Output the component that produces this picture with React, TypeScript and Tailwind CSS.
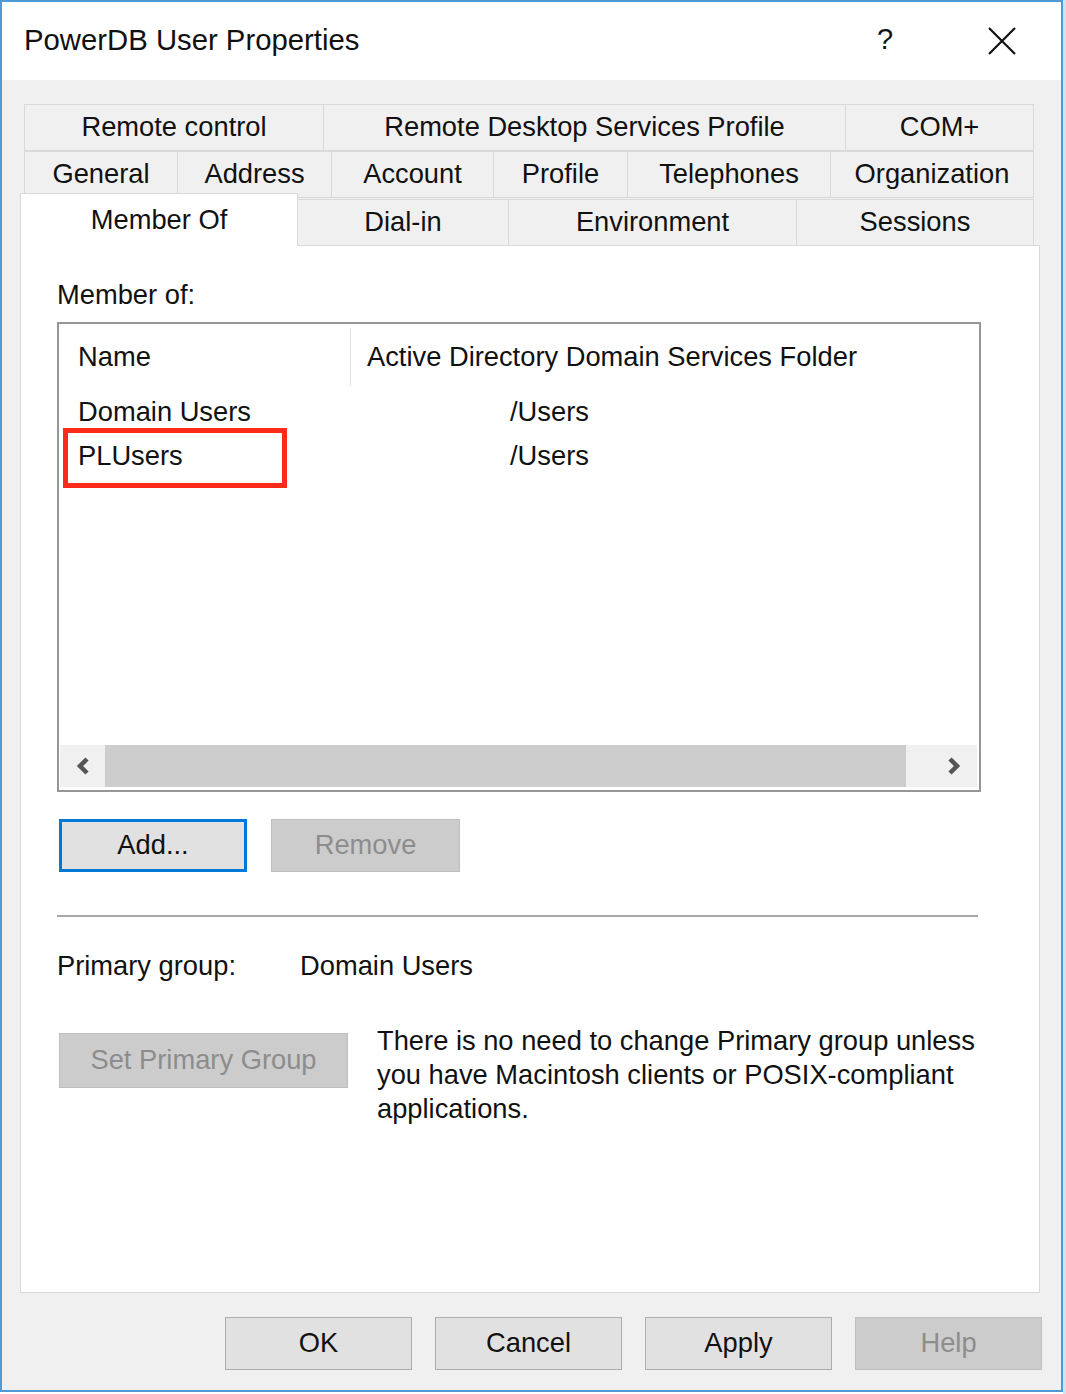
import React from "react";

const font = { fontFamily: '"Liberation Sans", Arial, sans-serif' };

function Tab({ w, label, h = 47 }: { w: number; label: string; h?: number }) {
  return (
    <div
      className="flex items-center justify-center border border-[#d9d9d9] bg-[#f0f0f0] text-[27.3px] text-[#111] -mr-px -mb-px"
      style={{ width: w, height: h }}
    >
      {label}
    </div>
  );
}

function Btn({ w, h, label, disabled, focus }: { w: number; h: number; label: string; disabled?: boolean; focus?: boolean }) {
  const cls = disabled
    ? "bg-[#cccccc] border border-[#bfbfbf] text-[#8d8d8d]"
    : focus
    ? "bg-[#e1e1e1] border-[3px] border-[#0078d7] text-[#111]"
    : "bg-[#e1e1e1] border border-[#adadad] text-[#111]";
  return (
    <div className={`flex items-center justify-center text-[27.3px] shrink-0 ${cls}`} style={{ width: w, height: h }}>
      {label}
    </div>
  );
}

function Chevron({ dir }: { dir: "l" | "r" }) {
  return (
    <svg width="16" height="22" viewBox="0 0 16 22">
      <path
        d={dir === "l" ? "M12 4 L5 11 L12 18" : "M4 4 L11 11 L4 18"}
        fill="none"
        stroke="#555"
        strokeWidth="4.5"
      />
    </svg>
  );
}

export default function App() {
  return (
    <div className="w-[1066px] h-[1394px] bg-white flex" style={font}>
      <div className="w-[1063px] h-[1392px] border-2 border-[#4f9ad4] flex flex-col bg-[#f0f0f0]">
        {/* Title bar */}
        <div className="h-[78px] bg-white flex items-center pl-[22px] shrink-0">
          <div className="text-[29.3px] text-[#111] -mt-[2px]">PowerDB User Properties</div>
          <div className="flex-1" />
          <div className="text-[29px] text-[#111] w-[30px] text-center -mt-[2px]">?</div>
          <div className="ml-[88px] mr-[45px] flex">
            <svg width="28" height="28" viewBox="0 0 28 28">
              <path d="M1 1 L27 27 M27 1 L1 27" stroke="#111" strokeWidth="2.2" fill="none" />
            </svg>
          </div>
        </div>

        {/* Body */}
        <div className="flex-1 flex flex-col px-[18px] pt-[24px]">
          <div className="ml-[4px] w-[1009px] flex flex-col">
            <div className="flex h-[47px]">
              <Tab w={300} label="Remote control" />
              <Tab w={523} label="Remote Desktop Services Profile" />
              <Tab w={189} label="COM+" />
            </div>
            <div className="flex h-[47px]">
              <Tab w={154} label="General" />
              <Tab w={155} label="Address" />
              <Tab w={163} label="Account" />
              <Tab w={135} label="Profile" />
              <Tab w={204} label="Telephones" />
              <Tab w={204} label="Organization" />
            </div>
            <div className="flex h-[47px] items-end">
              <div className="relative z-10 -ml-[4px] h-[53px] w-[278px] -mb-px bg-white border border-[#d9d9d9] border-b-0 flex justify-center pt-[6px] text-[27.3px] text-[#111] -mr-px">
                Member Of
              </div>
              <Tab w={212} label="Dial-in" />
              <Tab w={289} label="Environment" />
              <Tab w={238} label="Sessions" />
            </div>
          </div>

          {/* Panel */}
          <div className="w-[1020px] h-[1048px] bg-white border border-[#d9d9d9] pl-[36px] pt-[33px] flex flex-col">
            <div className="h-[32px] flex items-center text-[27.3px] text-[#111]">Member of:</div>

            <div className="relative mt-[11px] w-[924px] h-[470px] border-2 border-[#969696] flex flex-col">
              <div className="h-[66px] flex items-start text-[27.3px] text-[#111]">
                <div className="w-[291px] h-full flex items-center pl-[19px]">Name</div>
                <div className="w-px h-[58px] mt-[4px] bg-[#e3e3e3]" />
                <div className="h-full flex items-center pl-[16px]">Active Directory Domain Services Folder</div>
              </div>
              {[
                ["Domain Users", "/Users"],
                ["PLUsers", "/Users"],
              ].map(([n, f]) => (
                <div key={n} className="h-[44px] flex items-center text-[27.3px] text-[#111]">
                  <div className="w-[292px] pl-[19px]">{n}</div>
                  <div className="pl-[159px]">{f}</div>
                </div>
              ))}
              <div className="flex-1" />
              <div className="h-[42px] mb-[3px] ml-[1px] mr-[2px] flex">
                <div className="w-[45px] bg-[#f0f0f0] flex items-center justify-center">
                  <Chevron dir="l" />
                </div>
                <div className="flex-1 bg-[#cdcdcd]" />
                <div className="w-[71px] bg-[#f0f0f0] flex items-center justify-center pl-[25px]">
                  <Chevron dir="r" />
                </div>
              </div>
              <div className="absolute left-[4px] top-[104px] w-[224px] h-[60px] border-[5px] border-[#ff2a1a]" />
            </div>

            <div className="mt-[27px] ml-[2px] flex gap-[24px]">
              <Btn w={188} h={53} label="Add..." focus />
              <Btn w={189} h={53} label="Remove" disabled />
            </div>

            <div className="mt-[43px] w-[921px] h-[2px] bg-[#a8a8a8]" />

            <div className="mt-[33px] h-[32px] flex items-center text-[27.3px] text-[#111]">
              <div className="w-[243px]">Primary group:</div>
              <div>Domain Users</div>
            </div>

            <div className="mt-[51px] ml-[2px] flex items-start">
              <Btn w={289} h={55} label="Set Primary Group" disabled />
              <div className="ml-[29px] -mt-[9px] w-[620px] text-[27.3px] leading-[34px] text-[#111]">
                There is no need to change Primary group unless you have Macintosh clients or POSIX-compliant applications.
              </div>
            </div>
          </div>

          {/* Bottom buttons */}
          <div className="mt-[24px] flex justify-end gap-[23px] pr-[1px]">
            <Btn w={187} h={53} label="OK" />
            <Btn w={187} h={53} label="Cancel" />
            <Btn w={187} h={53} label="Apply" />
            <Btn w={187} h={53} label="Help" disabled />
          </div>
        </div>
      </div>
      <div className="w-[3px] h-[1394px] bg-[#d3e3ee]" />
    </div>
  );
}
